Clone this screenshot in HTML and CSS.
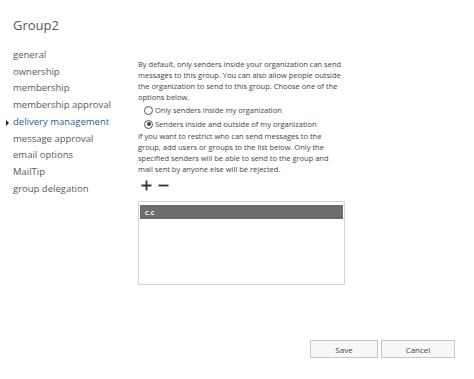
FILE: index.html
```html
<!DOCTYPE html>
<html lang="en">
<head>
  <meta charset="UTF-8" />
  <title>Group2</title>
  <link rel="stylesheet" href="styles.css">
</head>
<body>
  <div class="page">
    <h1 class="title">Group2</h1>

    <div class="columns">
      <ul class="nav">
        <li>general</li>
        <li>ownership</li>
        <li>membership</li>
        <li>membership approval</li>
        <li class="active">delivery management</li>
        <li>message approval</li>
        <li>email options</li>
        <li>MailTip</li>
        <li>group delegation</li>
      </ul>

      <div class="content">
        <p>By default, only senders inside your organization can send messages to this group. You can also allow people outside the organization to send to this group. Choose one of the options below.</p>

        <label class="radio"><span class="dot"></span>Only senders inside my organization</label>
        <label class="radio"><span class="dot checked"></span>Senders inside and outside of my organization</label>

        <p>If you want to restrict who can send messages to the group, add users or groups to the list below. Only the specified senders will be able to send to the group and mail sent by anyone else will be rejected.</p>

        <div class="tools">
          <svg width="11" height="11" viewBox="0 0 11 11"><path d="M5.5 0.5v10M0.5 5.5h10" stroke="#333" stroke-width="1.8"/></svg>
          <svg width="11" height="11" viewBox="0 0 11 11"><path d="M0.5 5.5h10" stroke="#333" stroke-width="1.8"/></svg>
        </div>

        <div class="list">
          <div class="row selected">c.c</div>
        </div>
      </div>
    </div>

    <div class="footer">
      <button class="btn">Save</button>
      <button class="btn cancel">Cancel</button>
    </div>
  </div>
</body>
</html>
```

FILE: styles.css
```css
body, html {
  margin: 0;
  padding: 0;
  height: 100%;
  background: #fff;
  font-family: 'Open Sans', 'Noto Sans', sans-serif;
  color: #333;
}

.page {
  height: 100%;
  display: flex;
  flex-direction: column;
  box-sizing: border-box;
  padding: 16px 0 0 0;
}

.title {
  margin: 0 0 0 13px;
  font-size: 13px;
  font-weight: 400;
  color: #5a5a5a;
  line-height: 18px;
}

.columns {
  display: flex;
  margin-top: 12px;
}

.nav {
  list-style: none;
  margin: 0;
  padding: 0 0 0 13px;
  width: 138px;
  box-sizing: border-box;
  font-size: 9.5px;
  color: #5a5a5a;
}

.nav li {
  line-height: 16.7px;
  white-space: nowrap;
  position: relative;
}

.nav li:first-child {
  margin-top: 1px;
}

.nav .active {
  color: #1f5f9e;
}

.nav .active::before {
  content: "";
  position: absolute;
  left: -7px;
  top: 6px;
  border-left: 3px solid #222;
  border-top: 3px solid transparent;
  border-bottom: 3px solid transparent;
}

.content {
  padding-top: 13px;
  width: 207px;
  font-size: 7.5px;
  line-height: 11px;
  color: #444;
}

.content p {
  margin: 0;
}

.radio {
  display: flex;
  align-items: center;
  height: 14px;
  padding-left: 6px;
}

.dot {
  width: 9px;
  height: 9px;
  border: 1px solid #555;
  border-radius: 50%;
  margin-right: 2px;
  box-sizing: border-box;
  position: relative;
}

.dot.checked::after {
  content: "";
  position: absolute;
  left: 1.5px;
  top: 1.5px;
  width: 4px;
  height: 4px;
  border-radius: 50%;
  background: #444;
}

.tools {
  display: flex;
  gap: 6px;
  margin: 5px 0 0 3px;
  height: 13px;
}

.list {
  margin-top: 8px;
  height: 84px;
  border: 1px solid #d4d4d4;
  padding: 3px 1px;
  box-sizing: border-box;
}

.row.selected {
  background: #6d6d6d;
  color: #fff;
  font-weight: 600;
  height: 14px;
  line-height: 14px;
  padding-left: 5px;
}

.footer {
  margin-top: auto;
  margin-bottom: 21px;
  display: flex;
  justify-content: flex-end;
  gap: 3px;
  padding-right: 19px;
}

.btn {
  width: 68px;
  height: 18px;
  border: 1px solid #c7c7c7;
  background: #f8f8f8;
  font-family: inherit;
  font-size: 8px;
  color: #444;
  padding: 0;
}

.btn.cancel {
  width: 74px;
}
```
